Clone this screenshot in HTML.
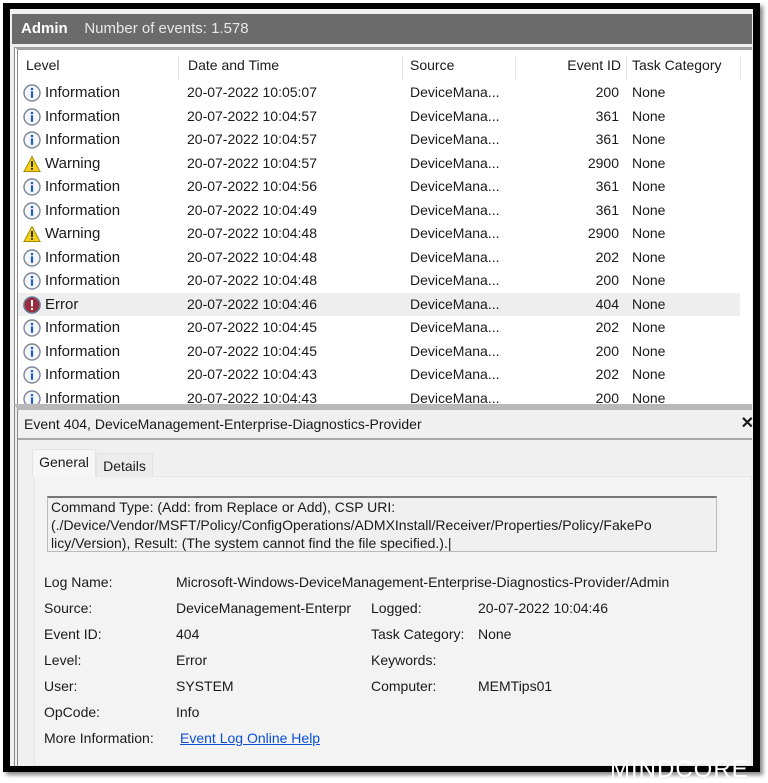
<!DOCTYPE html>
<html><head><meta charset="utf-8"><style>
*{margin:0;padding:0;box-sizing:border-box}
body{width:768px;height:782px;background:#fff;position:relative;overflow:hidden;font-family:"Liberation Sans",sans-serif;font-size:14px;color:#1a1a1a}
.abs{position:absolute}
.frame{left:3px;top:3px;width:757px;height:769px;background:#000;box-shadow:3px 3px 4px #888}
.inner{left:10px;top:9px;width:743px;height:757px;background:#f0f0f0}
.title{left:12px;top:14px;width:740px;height:30px;background:#6b6b6b;color:#fff;font-size:15px;line-height:30px;padding-left:9px}
.list{left:14px;top:47px;width:738px;height:357px;background:#fff;border-left:4px double #888;border-top:3px solid #a0a0a0}
.row{position:absolute;left:0;height:23px;line-height:23px;width:722px}
.c{position:absolute;white-space:nowrap}
.hdr .c{height:26px;line-height:26px}
.sep{position:absolute;top:4px;width:1px;height:24px;background:#e5e5e5}
.ico{position:absolute;left:5px;top:3px;width:18px;height:18px}
.det{left:14px;top:404px;width:738px;height:362px;background:#f0f0f0;border-left:4px double #888;border-top:6px solid #b8b8b8}
.lab{position:absolute;font-size:14px}
a{color:#0b4fd6;text-decoration:underline}
</style></head><body>
<div class="abs frame"></div>
<div class="abs inner"></div>
<div class="abs title"><b>Admin</b>&nbsp;&nbsp;&nbsp;&nbsp;<span style="color:#e8e8e8">Number of events: 1.578</span></div>
<div class="abs list">
 <div class="row hdr" style="top:2px">
  <span class="c" style="left:8px">Level</span>
  <div class="sep" style="left:160px"></div>
  <span class="c" style="left:170px">Date and Time</span>
  <div class="sep" style="left:384px"></div>
  <span class="c" style="left:392px">Source</span>
  <div class="sep" style="left:497px"></div>
  <span class="c" style="left:500px;width:103px;text-align:right">Event ID</span>
  <div class="sep" style="left:608px"></div>
  <span class="c" style="left:614px">Task Category</span>
  <div class="sep" style="left:722px"></div>
 </div>
 <div id="rows"></div>
</div>
<script>
var d=[["I","10:05:07","200"],["I","10:04:57","361"],["I","10:04:57","361"],["W","10:04:57","2900"],["I","10:04:56","361"],["I","10:04:49","361"],["W","10:04:48","2900"],["I","10:04:48","202"],["I","10:04:48","200"],["E","10:04:46","404"],["I","10:04:45","202"],["I","10:04:45","200"],["I","10:04:43","202"],["I","10:04:43","200"]];
var h="";
var ic={I:'<svg class="ico" viewBox="0 0 18 18"><circle cx="9" cy="9" r="8" fill="#f4f6fa" stroke="#7d8796" stroke-width="1.4"/><circle cx="9" cy="5" r="1.3" fill="#1f5fc4"/><rect x="7.9" y="7.3" width="2.2" height="6.5" fill="#1f5fc4"/></svg>',
W:'<svg class="ico" viewBox="0 0 18 18"><path d="M9 1.5L17 16.5H1Z" fill="#f5d21a" stroke="#a88a00" stroke-width="1"/><rect x="8.1" y="6" width="1.8" height="6" fill="#222"/><rect x="8.1" y="13" width="1.8" height="1.8" fill="#222"/></svg>',
E:'<svg class="ico" viewBox="0 0 18 18"><circle cx="9" cy="9" r="8" fill="#9b2b3e" stroke="#6c7a90" stroke-width="1.6"/><rect x="8" y="4" width="2" height="6.5" fill="#fff"/><rect x="8" y="12" width="2" height="2" fill="#fff"/></svg>'};
var nm={I:"Information",W:"Warning",E:"Error"};
for(var i=0;i<d.length;i++){var r=d[i];var t=31+i*23.5;
h+='<div class="row" style="top:'+t+'px;'+(r[0]=="E"?'background:#eeeeee;':'')+'">'+ic[r[0]]+'<span class="c" style="left:27px;font-size:15px">'+nm[r[0]]+'</span><span class="c" style="left:169px">20-07-2022 '+r[1]+'</span><span class="c" style="left:392px">DeviceMana...</span><span class="c" style="left:500px;width:101px;text-align:right">'+r[2]+'</span><span class="c" style="left:614px">None</span></div>';}
document.getElementById("rows").innerHTML=h;
</script>
<div class="abs det">
 <div class="abs" style="left:0;top:0;width:734px;height:30px;line-height:28px;padding-left:6px;border-bottom:2px solid #a8a8a8;background:#f0f0f0">Event 404, DeviceManagement-Enterprise-Diagnostics-Provider<b style="position:absolute;right:-2px;font-size:16px">✕</b></div>
 <div class="abs" style="left:16px;top:66px;width:718px;height:290px;background:#f3f3f3;border:1px solid #e6e6e6"></div>
 <div class="abs" style="left:14px;top:39px;width:64px;height:28px;background:#f6f6f6;border:1px solid #e3e3e3;border-bottom:none;line-height:24px;text-align:center">General</div>
 <div class="abs" style="left:78px;top:43px;width:57px;height:24px;background:#ececec;border:1px solid #e3e3e3;border-bottom:none;line-height:24px;text-align:center">Details</div>
 <div class="abs" style="left:29px;top:86px;width:670px;height:56px;border:1px solid #bbb;border-top:2px solid #777;background:#f0f0f0;padding:0 3px;line-height:18px;font-size:14px">Command Type: (Add: from Replace or Add), CSP URI:<br>(./Device/Vendor/MSFT/Policy/ConfigOperations/ADMXInstall/Receiver/Properties/Policy/FakePo<br>licy/Version), Result: (The system cannot find the file specified.).|</div>
 <div class="lab" style="left:26px;top:164px">Log Name:</div><div class="lab" style="left:158px;top:164px">Microsoft-Windows-DeviceManagement-Enterprise-Diagnostics-Provider/Admin</div>
 <div class="lab" style="left:26px;top:190px">Source:</div><div class="lab" style="left:158px;top:190px">DeviceManagement-Enterpr</div>
 <div class="lab" style="left:353px;top:190px">Logged:</div><div class="lab" style="left:460px;top:190px">20-07-2022 10:04:46</div>
 <div class="lab" style="left:26px;top:216px">Event ID:</div><div class="lab" style="left:158px;top:216px">404</div>
 <div class="lab" style="left:353px;top:216px">Task Category:</div><div class="lab" style="left:460px;top:216px">None</div>
 <div class="lab" style="left:26px;top:242px">Level:</div><div class="lab" style="left:158px;top:242px">Error</div>
 <div class="lab" style="left:353px;top:242px">Keywords:</div>
 <div class="lab" style="left:26px;top:268px">User:</div><div class="lab" style="left:158px;top:268px">SYSTEM</div>
 <div class="lab" style="left:353px;top:268px">Computer:</div><div class="lab" style="left:460px;top:268px">MEMTips01</div>
 <div class="lab" style="left:26px;top:294px">OpCode:</div><div class="lab" style="left:158px;top:294px">Info</div>
 <div class="lab" style="left:26px;top:320px">More Information:</div><div class="lab" style="left:162px;top:320px"><a>Event Log Online Help</a></div>
</div>
<div class="abs" style="left:610px;top:758px;color:#fff;font-size:24px;letter-spacing:1px;line-height:24px">MINDCORE</div>
</body></html>
